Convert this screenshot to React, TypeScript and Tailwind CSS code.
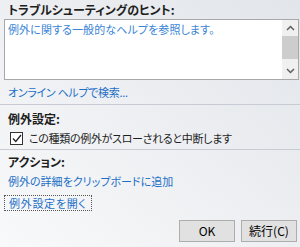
const ChevronUp = () => (
  <svg width="9" height="6" viewBox="0 0 9 6" fill="none">
    <path d="M1 5L4.5 1.5L8 5" stroke="#5f5f5f" strokeWidth="1.5" />
  </svg>
);

const ChevronDown = () => (
  <svg width="9" height="6" viewBox="0 0 9 6" fill="none">
    <path d="M1 1L4.5 4.5L8 1" stroke="#5f5f5f" strokeWidth="1.5" />
  </svg>
);

const App = () => {
  return (
    <div className="w-[300px] h-[247px] overflow-hidden bg-[linear-gradient(to_bottom_left,#e2e5ea,#f8f9fa)] text-[11px] tracking-[-0.3px] text-[#1e1e1e] font-['Noto_Sans_CJK_JP',sans-serif] [font-feature-settings:'palt']">
      {/* ヒント */}
      <div className="h-[19px] px-[8px] pt-[1px] flex items-center font-bold text-[12px] tracking-normal">
        トラブルシューティングのヒント:
      </div>
      <div className="ml-[4px] w-[295px] h-[61px] border border-[#a8a8a8] bg-white flex">
        <div className="flex-1 px-[3px] pt-[1px] leading-[17px] text-[#3884d6] tracking-[0.1px]">
          例外に関する一般的なヘルプを参照します。
        </div>
        <div className="w-[16px] bg-[#f0f0f0] flex flex-col">
          <div className="h-[16px] flex items-center justify-center">
            <ChevronUp />
          </div>
          <div className="h-[23px] bg-[#cdcdcd]" />
          <div className="flex-1" />
          <div className="h-[16px] flex items-center justify-center">
            <ChevronDown />
          </div>
        </div>
      </div>
      <div className="h-[24px] px-[8px] pt-[1px] flex items-center text-[#1c6fc6]">
        オンライン ヘルプで検索...
      </div>
      <div className="h-px bg-[#c6cbd4]" />

      {/* 例外設定 */}
      <div className="h-[23px] px-[8px] pt-[4px] flex items-center font-bold text-[12px] tracking-normal">例外設定:</div>
      <div className="h-[21px] pl-[10px] flex items-center gap-[6px]">
        <div className="w-[13px] h-[13px] border border-[#333333] bg-white flex items-center justify-center">
          <svg width="10" height="9" viewBox="0 0 10 9" fill="none">
            <path d="M1 4.5L3.8 7.5L9 1" stroke="#222222" strokeWidth="1.3" />
          </svg>
        </div>
        <span>この種類の例外がスローされると中断します</span>
      </div>
      <div className="h-px bg-[#c6cbd4]" />

      {/* アクション */}
      <div className="h-[22px] px-[8px] pt-[1px] flex items-center font-bold text-[12px] tracking-normal">アクション:</div>
      <div className="h-[18px] px-[8px] flex items-center text-[#1c6fc6] tracking-normal">
        例外の詳細をクリップボードに追加
      </div>
      <div className="mt-[5px] ml-[4px] w-[88px] h-[16px] border border-dotted border-[#555555] pl-[4px] flex items-center whitespace-nowrap text-[#1c6fc6] tracking-[0.7px]">
        例外設定を開く
      </div>

      <div className="mt-[9px] pr-[3px] flex justify-end gap-[6px] tracking-normal">
        <button className="w-[56px] h-[22px] bg-[#e1e1e1] border border-[#adadad] text-[12px] text-black flex items-center justify-center">
          OK
        </button>
        <button className="w-[56px] h-[22px] bg-[#e1e1e1] border border-[#adadad] text-[12px] text-black flex items-center justify-center">
          続行(C)
        </button>
      </div>
    </div>
  );
};

export default App;
